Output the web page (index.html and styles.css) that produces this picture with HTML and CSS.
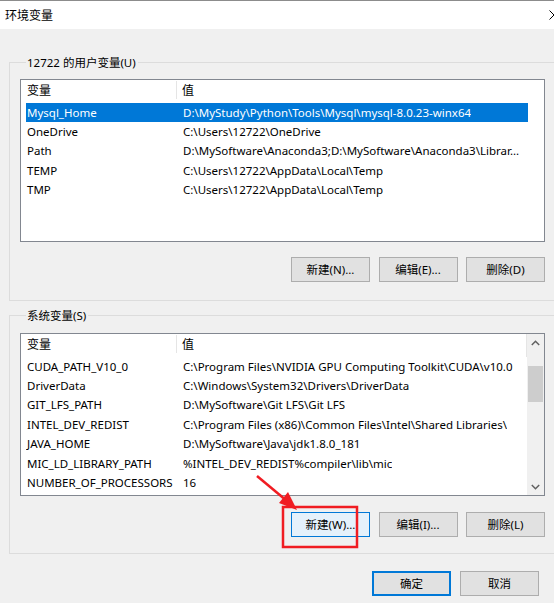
FILE: index.html
```html
<!DOCTYPE html>
<html lang="zh-CN">
<head>
<meta charset="utf-8">
<title>环境变量</title>
<link rel="stylesheet" href="styles.css">
</head>
<body>
<div class="window">
  <div class="titlebar">
    <span class="title">环境变量</span>
    <span class="close">
      <svg width="10" height="10" viewBox="0 0 10 10"><path d="M0.5 0.5 L9.5 9.5 M9.5 0.5 L0.5 9.5" stroke="#000" stroke-width="1" fill="none"/></svg>
    </span>
  </div>
  <div class="content">
    <div class="group group-user">
      <div class="legend">12722 的用户变量(U)</div>
      <div class="listbox">
        <div class="table">
          <div class="row header"><div class="c1">变量</div><div class="c2">值</div></div>
          <div class="row selected"><div class="c1">Mysql_Home</div><div class="c2">D:\MyStudy\Python\Tools\Mysql\mysql-8.0.23-winx64</div></div>
          <div class="row"><div class="c1">OneDrive</div><div class="c2">C:\Users\12722\OneDrive</div></div>
          <div class="row"><div class="c1">Path</div><div class="c2">D:\MySoftware\Anaconda3;D:\MySoftware\Anaconda3\Librar...</div></div>
          <div class="row"><div class="c1">TEMP</div><div class="c2">C:\Users\12722\AppData\Local\Temp</div></div>
          <div class="row"><div class="c1">TMP</div><div class="c2">C:\Users\12722\AppData\Local\Temp</div></div>
        </div>
      </div>
      <div class="buttons">
        <button class="btn">新建(N)...</button>
        <button class="btn">编辑(E)...</button>
        <button class="btn">删除(D)</button>
      </div>
    </div>

    <div class="group group-sys">
      <div class="legend">系统变量(S)</div>
      <div class="listbox with-scroll">
        <div class="table">
          <div class="row header"><div class="c1">变量</div><div class="c2">值</div></div>
          <div class="row"><div class="c1">CUDA_PATH_V10_0</div><div class="c2">C:\Program Files\NVIDIA GPU Computing Toolkit\CUDA\v10.0</div></div>
          <div class="row"><div class="c1">DriverData</div><div class="c2">C:\Windows\System32\Drivers\DriverData</div></div>
          <div class="row"><div class="c1">GIT_LFS_PATH</div><div class="c2">D:\MySoftware\Git LFS\Git LFS</div></div>
          <div class="row"><div class="c1">INTEL_DEV_REDIST</div><div class="c2">C:\Program Files (x86)\Common Files\Intel\Shared Libraries\</div></div>
          <div class="row"><div class="c1">JAVA_HOME</div><div class="c2">D:\MySoftware\Java\jdk1.8.0_181</div></div>
          <div class="row"><div class="c1">MIC_LD_LIBRARY_PATH</div><div class="c2">%INTEL_DEV_REDIST%compiler\lib\mic</div></div>
          <div class="row"><div class="c1">NUMBER_OF_PROCESSORS</div><div class="c2">16</div></div>
        </div>
        <div class="scrollbar">
          <div class="arrow">
            <svg width="9" height="6" viewBox="0 0 9 6"><path d="M0.8 5 L4.5 1.3 L8.2 5" stroke="#606060" stroke-width="1.5" fill="none"/></svg>
          </div>
          <div class="track"><div class="thumb"></div></div>
          <div class="arrow">
            <svg width="9" height="6" viewBox="0 0 9 6"><path d="M0.8 1 L4.5 4.7 L8.2 1" stroke="#606060" stroke-width="1.5" fill="none"/></svg>
          </div>
        </div>
      </div>
      <div class="buttons">
        <button class="btn hot">新建(W)...</button>
        <button class="btn">编辑(I)...</button>
        <button class="btn">删除(L)</button>
      </div>
    </div>

    <div class="footer">
      <button class="btn default">确定</button>
      <button class="btn">取消</button>
    </div>
  </div>

  <svg class="annotation" width="554" height="603" viewBox="0 0 554 603">
    <rect x="283" y="507" width="74" height="40" fill="none" stroke="#f01c22" stroke-width="2.5"/>
    <line x1="257" y1="476" x2="287" y2="501" stroke="#f01c22" stroke-width="2.5"/>
    <polygon points="297,510 279,503 288,492" fill="#f01c22"/>
  </svg>
</div>
</body>
</html>
```

FILE: styles.css
```css
* { box-sizing: border-box; }

html, body {
  margin: 0;
  padding: 0;
  background: #f0f0f0;
}

body {
  font-family: "Noto Sans", "Noto Sans CJK SC", sans-serif;
  font-size: 11.5px;
  color: #000;
}

.window {
  position: relative;
  width: 554px;
  height: 603px;
  overflow: hidden;
  background: #f0f0f0;
}

.titlebar {
  height: 29px;
  background: #fff;
  border-top: 1px solid #8c8c8c;
  display: flex;
  align-items: center;
  justify-content: space-between;
  padding: 0 0 0 5px;
}

.title {
  font-family: "Noto Sans CJK SC", sans-serif;
  font-size: 12px;
  line-height: 16px;
  padding-bottom: 1px;
}

.close {
  display: flex;
  margin-right: -5px;
  padding-bottom: 1px;
}

.content {
  padding: 33px 0 0 9px;
}

.group {
  width: 560px;
  border: 1px solid #dcdcdc;
  padding: 0 0 18px 10px;
}

.group-sys {
  margin-top: 14px;
  padding-bottom: 16px;
}

.legend {
  width: fit-content;
  height: 16px;
  line-height: 16px;
  margin: -8px 0 0 6px;
  padding: 0 2px 0 1px;
  background: #f0f0f0;
  font-family: "Noto Sans", "Noto Sans CJK SC", sans-serif;
}

.listbox {
  width: 525px;
  height: 163px;
  margin-top: 8px;
  border: 1px solid #828790;
  background: #fff;
  display: flex;
  overflow: hidden;
}

.group-sys .listbox {
  margin-top: 9px;
}

.table {
  flex: 1;
  min-width: 0;
}

.row {
  display: flex;
  height: 19.4px;
  align-items: center;
  margin-left: 5px;
  width: 502px;
  white-space: nowrap;
  line-height: 16px;
}

.row .c1 {
  width: 151px;
  flex: none;
  padding-left: 1px;
  overflow: hidden;
}

.row .c2 {
  padding-left: 6px;
  overflow: hidden;
}

.row.header {
  height: 23px;
  margin-left: 0;
  width: 507px;
  font-family: "Noto Sans CJK SC", sans-serif;
  font-size: 12px;
}

.row.header .c1 {
  width: 156px;
  padding-left: 6px;
  height: 18px;
  line-height: 18px;
  border-right: 1px solid #e5e5e5;
  align-self: flex-start;
  margin-top: 1px;
}

.row.header .c2 {
  padding-left: 5px;
  align-self: flex-start;
  margin-top: 1px;
  height: 18px;
  line-height: 18px;
}

.with-scroll .row.header {
  border-right: 1px solid #e5e5e5;
  width: 506px;
}

.row.selected {
  background: #0078d7;
  color: #fff;
}

.scrollbar {
  width: 17px;
  flex: none;
  background: #f0f0f0;
  display: flex;
  flex-direction: column;
}

.arrow {
  height: 17px;
  display: flex;
  align-items: center;
  justify-content: center;
  flex: none;
}

.track {
  flex: 1;
  padding: 15px 1px 0 1px;
}

.thumb {
  height: 36px;
  background: #cdcdcd;
}

.buttons {
  width: 525px;
  display: flex;
  justify-content: flex-end;
  gap: 8.5px;
  margin-top: 15px;
}

.group-sys .buttons {
  margin-top: 16px;
}

.btn {
  width: 79px;
  height: 25px;
  margin: 0;
  padding: 0;
  background: #e1e1e1;
  border: 1px solid #adadad;
  font-family: "Noto Sans", "Noto Sans CJK SC", sans-serif;
  font-size: 11.5px;
  color: #000;
  line-height: 16px;
}

.btn.hot {
  background: #e5f1fb;
  border-color: #0078d7;
}

.btn.default {
  border: 2px solid #0078d7;
}

.footer {
  display: flex;
  justify-content: flex-end;
  gap: 9px;
  padding-right: 15px;
  margin-top: 17px;
}

.annotation {
  position: absolute;
  left: 0;
  top: 0;
  pointer-events: none;
}
```
